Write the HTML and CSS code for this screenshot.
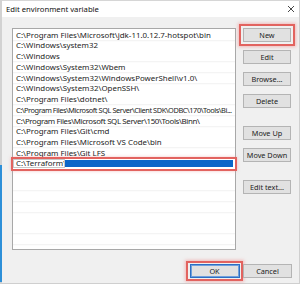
FILE: index.html
```html
<!DOCTYPE html>
<html>
<head>
<meta charset="utf-8">
<link rel="stylesheet" href="styles.css">
</head>
<body>
<div class="screen">
  <div class="edge"></div>
  <div class="window">
    <div class="titlebar">
      <span class="title">Edit environment variable</span>
      <svg class="close" width="8" height="8" viewBox="0 0 8 8"><path d="M1 1L7 7M7 1L1 7" stroke="#333" stroke-width="0.9" fill="none"/></svg>
    </div>
    <div class="body">
      <div class="main">
        <div class="list">
          <div class="row">C:\Program Files\Microsoft\jdk-11.0.12.7-hotspot\bin</div>
          <div class="row">C:\Windows\system32</div>
          <div class="row">C:\Windows</div>
          <div class="row">C:\Windows\System32\Wbem</div>
          <div class="row">C:\Windows\System32\WindowsPowerShell\v1.0\</div>
          <div class="row">C:\Windows\System32\OpenSSH\</div>
          <div class="row">C:\Program Files\dotnet\</div>
          <div class="row tighter">C:\Program Files\Microsoft SQL Server\Client SDK\ODBC\170\Tools\Bi...</div>
          <div class="row tight">C:\Program Files\Microsoft SQL Server\150\Tools\Binn\</div>
          <div class="row">C:\Program Files\Git\cmd</div>
          <div class="row">C:\Program Files\Microsoft VS Code\bin</div>
          <div class="row">C:\Program Files\Git LFS</div>
          <div class="row editing">
            <span class="edit-text">C:\Terraform\<span class="caret"></span></span>
            <span class="selection"></span>
          </div>
        </div>
        <div class="side">
          <div class="mark"><button class="btn">New</button></div>
          <button class="btn">Edit</button>
          <button class="btn">Browse...</button>
          <button class="btn">Delete</button>
          <button class="btn group">Move Up</button>
          <button class="btn">Move Down</button>
          <button class="btn group">Edit text...</button>
        </div>
      </div>
      <div class="footer">
        <div class="mark ok-mark"><button class="btn ok">OK</button></div>
        <button class="btn">Cancel</button>
      </div>
    </div>
  </div>
</div>
</body>
</html>
```

FILE: styles.css
```css
* { box-sizing: border-box; }
html, body { margin: 0; padding: 0; }
body {
  width: 300px;
  height: 284px;
  overflow: hidden;
  font-family: "Noto Sans", "DejaVu Sans", sans-serif;
  background: #f0f0f0;
}
.screen {
  display: flex;
  width: 300px;
  height: 284px;
}
.edge {
  width: 2px;
  flex: none;
  background: linear-gradient(to bottom, #d2d2d2 0, #d2d2d2 165px, #2d8fd8 165px, #2d8fd8 282px, #d2d2d2 282px);
}
.window {
  flex: 1;
  display: flex;
  flex-direction: column;
  border-top: 1px solid #d6d6d6;
  border-right: 1px solid #cfcfcf;
  border-bottom: 1px solid #cfcfcf;
  background: #f0f0f0;
}
.titlebar {
  height: 16px;
  flex: none;
  background: #fff;
  display: flex;
  align-items: center;
  justify-content: space-between;
  padding: 0 4px 0 4px;
}
.title {
  font-size: 7.7px;
  color: #111;
}
.close { display: block; }
.body {
  flex: 1;
  display: flex;
  flex-direction: column;
  padding: 11px 6px 0 10px;
}
.main {
  display: flex;
  align-items: flex-start;
}
.list {
  width: 224px;
  height: 222px;
  border: 1px solid #a8a8a8;
  padding-top: 0.6px;
  background-color: #fff;
  background-image: repeating-linear-gradient(to bottom, #fff 0, #fff 9.75px, #f1f1f1 9.75px, #f1f1f1 10.75px);
  background-position: 0 0.6px;
  background-origin: content-box;
  font-size: 7.9px;
  color: #1c1c1c;
}
.row {
  height: 10.75px;
  line-height: 10.75px;
  padding-left: 3px;
  padding-right: 1px;
  white-space: nowrap;
  overflow: hidden;
}
.row.tight { letter-spacing: -0.36px; }
.row.tighter { font-size: 7.4px; letter-spacing: -0.44px; }
.row.editing {
  display: flex;
  align-items: center;
  padding: 0;
  outline: 2px solid #e2635f;
  box-shadow: 0 0 3px 2px rgba(240, 140, 140, 0.5);
  overflow: visible;
  background: #fff;
}
.edit-text {
  flex: none;
  width: 52px;
  height: 9px;
  line-height: 9px;
  padding-left: 2px;
  border: 1px solid #c8c8c8;
  display: flex;
  align-items: center;
  background: #fff;
  white-space: nowrap;
  overflow: hidden;
}
.caret {
  display: inline-block;
  flex: none;
  width: 1px;
  height: 7px;
  background: #333;
  margin-left: 1px;
}
.selection {
  flex: 1;
  min-width: 0;
  height: 7px;
  margin-right: 2px;
  background: #0a66c8;
}
.side {
  width: 48px;
  margin-left: 7px;
  display: flex;
  flex-direction: column;
  gap: 8px;
}
.btn {
  display: block;
  width: 48px;
  height: 14px;
  margin: 0;
  padding: 0;
  border: 1px solid #b4b4b4;
  background: #e1e1e1;
  font-family: "Noto Sans", "DejaVu Sans", sans-serif;
  font-size: 7.3px;
  color: #222;
  line-height: 12px;
  text-align: center;
}
.btn.group { margin-top: 10px; }
.mark {
  border: 2px solid #e2635f;
  box-shadow: 0 0 3px 1px rgba(240, 140, 140, 0.55);
  padding: 2px;
  margin: -4px;
}
.footer {
  display: flex;
  justify-content: flex-end;
  align-items: center;
  margin-top: 11px;
  padding-right: 1px;
}
.ok-mark {
  margin: 0;
  padding: 1px 1.5px;
}
.btn.ok {
  width: 50px;
  border: 1px solid #2d6fc4;
  box-shadow: inset 0 0 0 1px #6fa0dc;
}
.footer > .btn { width: 49px; }
```
